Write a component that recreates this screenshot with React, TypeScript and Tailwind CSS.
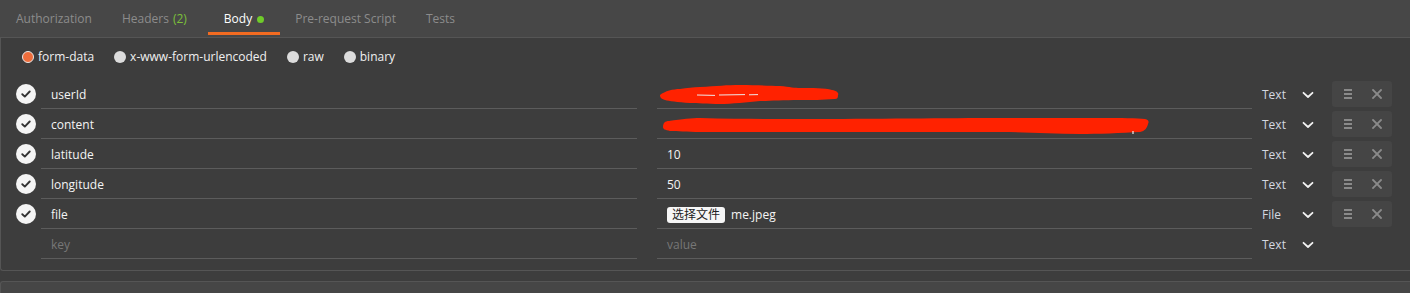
import React from 'react';

type Row = {
  k: string;
  v: string;
  type: string;
  kind?: 'redact1' | 'redact2' | 'file';
};

const rows: Row[] = [
  { k: 'userId', v: '', type: 'Text', kind: 'redact1' },
  { k: 'content', v: '', type: 'Text', kind: 'redact2' },
  { k: 'latitude', v: '10', type: 'Text' },
  { k: 'longitude', v: '50', type: 'Text' },
  { k: 'file', v: 'me.jpeg', type: 'File', kind: 'file' },
];

const Check = () => (
  <div className="w-5 h-5 rounded-full bg-[#f4f4f4] flex items-center justify-center shrink-0">
    <svg width="10" height="8" viewBox="0 0 10 8">
      <path d="M1.3 4.2 L3.8 6.6 L8.7 1.5" fill="none" stroke="#333" strokeWidth="1.9" strokeLinecap="round" strokeLinejoin="round" />
    </svg>
  </div>
);

const Chevron = () => (
  <svg width="12" height="8" viewBox="0 0 12 8">
    <path d="M1.5 1.8 L6 6 L10.5 1.8" fill="none" stroke="#f2f2f2" strokeWidth="1.8" strokeLinecap="round" strokeLinejoin="round" />
  </svg>
);

const Actions = () => (
  <div className="w-[60px] h-[26px] rounded-[3px] bg-[#454545] flex items-center justify-between pl-[12px] pr-[10px]">
    <svg width="8" height="10" viewBox="0 0 8 10">
      <rect x="0" y="0" width="8" height="2" fill="#8a8a8a" />
      <rect x="0" y="4" width="8" height="2" fill="#8a8a8a" />
      <rect x="0" y="8" width="8" height="2" fill="#8a8a8a" />
    </svg>
    <svg width="10" height="10" viewBox="0 0 10 10">
      <path d="M1 1 L9 9 M9 1 L1 9" stroke="#8a8a8a" strokeWidth="1.8" strokeLinecap="square" />
    </svg>
  </div>
);

// red marker strokes covering private values
const Redact1 = () => (
  <svg width="190" height="24" viewBox="0 0 190 24" className="-ml-[10px]">
    <path
      d="M3 12 C 8 8, 16 6, 23 6 C 30 5, 36 4, 43 4 C 60 3, 70 2, 83 2 C 100 2, 113 3, 123 3 C 133 4, 138 5, 143 5 C 155 5, 168 5, 175 7 C 181 8, 182 11, 181 12 C 181 15, 180 16, 178 16 C 165 17, 155 17, 143 17 C 125 17, 113 18, 103 18 C 90 19, 75 21, 63 21 C 50 21, 40 20, 33 20 C 20 19, 12 18, 8 17 C 4 16, 3 14, 3 12 Z"
      fill="#ff2200"
    />
    <path d="M40 12 L58 12.4 M62 12 L88 11.6 M92 11.8 L101 11.6" stroke="#f0e8e8" strokeWidth="1" />
  </svg>
);

const Redact2 = () => (
  <svg width="495" height="24" viewBox="0 0 495 24" className="-ml-[10px]">
    <path
      d="M6 14 C 6 10, 8 8, 12 8 C 25 6, 35 5, 43 5 C 80 6, 110 6, 143 6 C 220 6, 290 5, 343 5 C 390 5, 420 5, 443 5 C 465 5, 480 5, 488 6 C 492 7, 492 9, 491 11 C 490 15, 488 18, 483 19 C 465 20, 440 21, 423 21 C 395 21, 370 19, 343 19 C 310 19, 280 19, 243 19 C 200 19, 170 19, 143 19 C 100 19, 70 19, 43 19 C 30 19, 20 18, 13 18 C 8 17, 6 16, 6 14 Z"
      fill="#ff2200"
    />
    <path d="M476 18 L476 21" stroke="#f0f0f0" strokeWidth="1.2" />
  </svg>
);

const App: React.FC = () => {
  return (
    <div className="w-[1410px] h-[293px] bg-[#3d3d3d] overflow-hidden text-[12px]" style={{ fontFamily: '"Open Sans", "Noto Sans CJK SC", sans-serif' }}>
      <div className="h-[38px] bg-[#474747] border-b border-[#555] flex items-stretch">
        <div className="pl-4 pr-[15px] flex items-center pt-[1px] text-[#8c8c8c]">Authorization</div>
        <div className="px-[15px] flex items-center pt-[1px] text-[#8c8c8c]">
          Headers <span className="ml-1 text-[#7cc03a]">(2)</span>
        </div>
        <div className="ml-[6px] px-4 flex items-center pt-[1px] text-white relative">
          Body
          <span className="ml-[5px] w-[7px] h-[7px] rounded-full bg-[#6fcb2a]" />
          <span className="absolute left-0 right-0 bottom-[2px] h-[3px] bg-[#f26b21]" />
        </div>
        <div className="px-[15px] flex items-center pt-[1px] text-[#8c8c8c]">Pre-request Script</div>
        <div className="px-[15px] flex items-center pt-[1px] text-[#8c8c8c]">Tests</div>
      </div>

      <div className="h-[233px] border-l border-b border-[#555] rounded-bl-[3px]">
        <div className="h-[41px] flex items-center pb-[3px] pl-[21px] gap-[20px] text-[#f0f0f0]">
          <label className="flex items-center gap-[4px]">
            <span className="w-[12px] h-[12px] rounded-full bg-[#ee6d3c] border-[1.5px] border-[#e8e8e8]" />
            form-data
          </label>
          <label className="flex items-center gap-[4px]">
            <span className="w-[12px] h-[12px] rounded-full bg-[#dcdcdc]" />
            x-www-form-urlencoded
          </label>
          <label className="flex items-center gap-[4px]">
            <span className="w-[12px] h-[12px] rounded-full bg-[#dcdcdc]" />
            raw
          </label>
          <label className="flex items-center gap-[4px]">
            <span className="w-[12px] h-[12px] rounded-full bg-[#dcdcdc]" />
            binary
          </label>
        </div>

        {rows.map((r) => (
          <div key={r.k} className="h-[30px] flex items-stretch">
            <div className="w-[40px] pl-[15px] flex items-center">
              <Check />
            </div>
            <div className="w-[596px] border-b border-[#5c5c5c] flex items-center pl-[10px] pt-[2px] text-[#f4f4f4]">{r.k}</div>
            <div className="w-[20px]" />
            <div className="w-[595px] border-b border-[#5c5c5c] flex items-center pl-[10px] pt-[2px] text-[#f4f4f4]">
              {r.kind === 'redact1' && <Redact1 />}
              {r.kind === 'redact2' && <Redact2 />}
              {r.kind === 'file' && (
                <div className="flex items-center gap-[6px]">
                  <span className="h-[16px] px-[5px] bg-[#f6f6f6] rounded-[3px] text-[#222] text-[12px] leading-[16px]">选择文件</span>
                  <span>{r.v}</span>
                </div>
              )}
              {!r.kind && r.v}
            </div>
            <div className="w-[80px] flex items-center pl-[10px] pt-[1px] gap-[13px] text-[#d4d8e0]">
              <span className="w-[27px]">{r.type}</span>
              <Chevron />
            </div>
            <div className="flex items-center">
              <Actions />
            </div>
          </div>
        ))}

        <div className="h-[30px] flex items-stretch">
          <div className="w-[40px]" />
          <div className="w-[596px] border-b border-[#5c5c5c] flex items-center pl-[10px] pt-[2px] text-[#777]">key</div>
          <div className="w-[20px]" />
          <div className="w-[595px] border-b border-[#5c5c5c] flex items-center pl-[10px] pt-[2px] text-[#777]">value</div>
          <div className="w-[80px] flex items-center pl-[10px] pt-[1px] gap-[13px] text-[#d4d8e0]">
            <span className="w-[27px]">Text</span>
            <Chevron />
          </div>
        </div>
      </div>

      <div className="h-[10px]" />
      <div className="h-[12px] bg-[#464646] border-t border-l border-[#555] rounded-tl-[3px]" />
    </div>
  );
};

export default App;
